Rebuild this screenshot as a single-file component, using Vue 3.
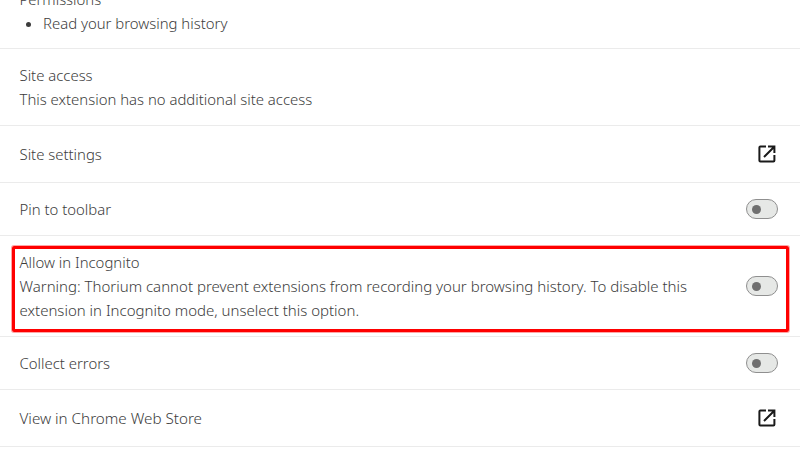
<template>
	<div class="page">
		<section class="row perms">
			<div class="label">Permissions</div>
			<ul class="perm-list">
				<li>Read your browsing history</li>
			</ul>
		</section>
		<section class="row site-access">
			<div class="label">Site access</div>
			<div class="desc">This extension has no additional site access</div>
		</section>
		<section class="row link site-settings">
			<div class="label">Site settings</div>
			<svg class="open-icon" viewBox="0 0 20 20" width="20" height="20">
				<path d="M9 2.5H3.4a1 1 0 0 0-1 1v13a1 1 0 0 0 1 1h13a1 1 0 0 0 1-1V11" fill="none" stroke="#1a1a1a" stroke-width="2" />
				<path d="M7 13 17 3M11 2.5h6.4V9" fill="none" stroke="#1a1a1a" stroke-width="2" />
			</svg>
		</section>
		<section class="row toggle-row pin">
			<div class="label">Pin to toolbar</div>
			<span class="toggle"><i></i></span>
		</section>
		<section class="row toggle-row incognito">
			<div class="text">
				<div class="label">Allow in Incognito</div>
				<div class="desc">Warning: Thorium cannot prevent extensions from recording your browsing history. To disable this extension in Incognito mode, unselect this option.</div>
			</div>
			<span class="toggle"><i></i></span>
			<div class="highlight"></div>
		</section>
		<section class="row toggle-row errors">
			<div class="label">Collect errors</div>
			<span class="toggle"><i></i></span>
		</section>
		<section class="row link store">
			<div class="label">View in Chrome Web Store</div>
			<svg class="open-icon" viewBox="0 0 20 20" width="20" height="20">
				<path d="M9 2.5H3.4a1 1 0 0 0-1 1v13a1 1 0 0 0 1 1h13a1 1 0 0 0 1-1V11" fill="none" stroke="#1a1a1a" stroke-width="2" />
				<path d="M7 13 17 3M11 2.5h6.4V9" fill="none" stroke="#1a1a1a" stroke-width="2" />
			</svg>
		</section>
	</div>
</template>

<script setup>
</script>

<style>
html,
body {
	background: #fff;
	overflow: hidden;
}
</style>

<style scoped>
.page {
	width: 800px;
	height: 457px;
	overflow: hidden;
	font-family: "Noto Sans", "Open Sans", sans-serif;
	font-size: 14.9px;
	font-weight: 300;
	line-height: 24px;
	color: #3c3c3c;
}
.row {
	position: relative;
	box-sizing: border-box;
	border-bottom: 1px solid #ebebeb;
	padding: 0 22px 0 19.5px;
	display: flex;
	align-items: center;
	justify-content: space-between;
}
.perms {
	display: block;
	height: 62px;
	margin-top: -13px;
}
.perm-list {
	margin: 0;
	padding: 0 0 0 23.5px;
}
.site-access {
	display: block;
	height: 77px;
	padding-top: 14px;
}
.site-settings {
	height: 57px;
}
.pin {
	height: 53px;
}
.incognito {
	height: 101px;
}
.incognito .text {
	width: 690px;
}
.incognito .desc {
	font-size: 15px;
}
.errors {
	height: 53px;
}
.store {
	height: 57px;
}
.store .label {
	font-size: 15.2px;
}
.open-icon {
	margin-left: auto;
	flex: none;
	margin-right: 1px;
}
.toggle {
	flex: none;
	box-sizing: border-box;
	width: 32px;
	height: 20px;
	border: 1px solid #8f8f8f;
	border-radius: 10px;
	background: #e6e8e6;
	display: flex;
	align-items: center;
	padding-left: 5px;
}
.toggle i {
	width: 9px;
	height: 9px;
	border-radius: 50%;
	background: #6f6f6f;
}
.highlight {
	position: absolute;
	left: 12px;
	right: 11px;
	top: 10px;
	bottom: 4px;
	border: 3px solid #ff0000;
	border-radius: 2px;
	box-shadow: 0 0 0 1px rgba(255, 0, 0, 0.35);
}
</style>
